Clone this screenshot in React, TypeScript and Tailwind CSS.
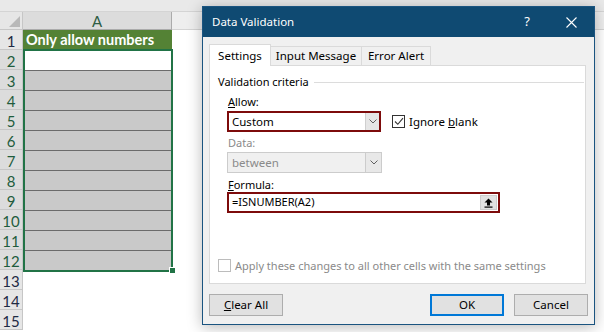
import React from "react";

const rows = Array.from({ length: 15 }, (_, i) => i + 1);

function Chevron() {
  return (
    <svg width="8" height="5" viewBox="0 0 8 5">
      <path d="M0.5 0.5 L4 4 L7.5 0.5" fill="none" stroke="#606060" strokeWidth="1" />
    </svg>
  );
}

function Sheet() {
  return (
    <div className="absolute inset-0 font-['Lato',sans-serif]">
      <div className="h-[12px] bg-[#e9e9e9] border-b border-[#d4d4d4]" />
      <div className="flex h-[18px]">
        <div className="relative w-[23px] bg-[#e6e6e6] border-r border-b border-[#c6c6c6]">
          <svg className="absolute right-[2px] bottom-[2px]" width="11" height="11" viewBox="0 0 11 11">
            <path d="M11 0 L11 11 L0 11 Z" fill="#b9b9b9" />
          </svg>
        </div>
        <div className="w-[149px] bg-[#dcdcdc] border-r border-b border-[#ababab] text-center text-[15px] leading-[18px] text-[#2f5d44]">
          A
        </div>
        <div className="flex-1 bg-[#eeeeee] border-b border-[#d4d4d4]" />
      </div>
      {rows.map((r) => {
        const sel = r >= 2 && r <= 12;
        return (
          <div key={r} className="flex h-[20px]">
            <div
              className={`w-[23px] border-r border-b border-[#c6c6c6] text-center text-[15px] leading-[22px] ${
                sel ? "bg-[#dcdcdc] text-[#1f5c3d]" : "bg-[#e6e6e6] text-[#1e2a44]"
              }`}
            >
              {r}
            </div>
            {r === 1 ? (
              <div className="w-[149px] bg-[#548235] text-white font-bold text-[14.5px] leading-[20px] pl-[3px]">
                Only allow numbers
              </div>
            ) : r >= 3 && r <= 12 ? (
              <div className="w-[149px] bg-[#c9c9c9] border-t border-[#6b6b6b]" />
            ) : (
              <div className="w-[149px] bg-white" />
            )}
            <div className="flex-1 bg-white" />
          </div>
        );
      })}
      <div className="absolute left-[23px] top-[49px] w-[150px] h-[223px] border-2 border-[#217346]" />
      <div className="absolute left-[169px] top-[267px] w-[7px] h-[7px] bg-[#217346] border border-white" />
    </div>
  );
}

function Dialog() {
  return (
    <div className="absolute left-[202px] top-[6px] w-[393px] h-[319px] flex flex-col bg-[#f0f0f0] border border-[#1a5480] shadow-[0_2px_14px_rgba(0,0,0,0.28)] font-['Noto_Sans',sans-serif] text-[11px] text-black">
      <div className="h-[30px] flex items-center bg-[#0f4a72] text-white pl-[9px] pr-[17px]">
        <span className="text-[11.5px]">Data Validation</span>
        <span className="ml-auto text-[13px]">?</span>
        <svg className="ml-[36px]" width="11" height="11" viewBox="0 0 11 11">
          <path d="M0.5 0.5 L10.5 10.5 M10.5 0.5 L0.5 10.5" stroke="white" strokeWidth="1.1" />
        </svg>
      </div>
      <div className="flex-1 flex flex-col px-[6px]">
        <div className="flex items-end h-[21px] mt-[7px]">
          <div className="relative z-10 -mb-px h-[22px] w-[62px] bg-white border-x border-t border-[#dadada] flex items-center justify-center text-[11.5px]">
            Settings
          </div>
          <div className="h-[19px] w-[91px] border-t border-r border-[#dadada] flex items-center justify-center text-[11.5px]">
            Input Message
          </div>
          <div className="h-[19px] w-[69px] border-t border-r border-[#dadada] flex items-center justify-center text-[11.5px]">
            Error Alert
          </div>
        </div>
        <div className="h-[219px] w-[377px] bg-white border border-[#dadada] flex flex-col pl-[8px]">
          <div className="mt-[8px] h-[16px] flex items-center pr-[1px]">
            <span className="leading-[16px]">Validation criteria</span>
            <div className="flex-1 ml-[5px] border-t border-[#dcdcdc]" />
          </div>
          <div className="ml-[9px] flex flex-col">
            <div className="mt-[4px] h-[16px] leading-[16px] pl-[1px]">
              <u>A</u>llow:
            </div>
            <div className="mt-[1px] flex items-center">
              <div className="w-[154px] h-[21px] border-2 border-[#7d0b0b] flex items-center">
                <span className="flex-1 pl-[3px] leading-[17px] text-[11.5px]">Custom</span>
                <div className="w-[14px] h-full bg-[#e6e6e6] border-l border-[#cfcfcf] flex items-center justify-center">
                  <Chevron />
                </div>
              </div>
              <div className="ml-[11px] w-[13px] h-[13px] border border-[#333333] flex items-center justify-center">
                <svg width="10" height="9" viewBox="0 0 10 9">
                  <path d="M1 4.5 L3.8 7.3 L9 1.2" fill="none" stroke="#333333" strokeWidth="1.1" />
                </svg>
              </div>
              <span className="ml-[4px] text-[11.5px]">
                Ignore <u>b</u>lank
              </span>
            </div>
            <div className="mt-[3px] h-[16px] leading-[16px] pl-[1px] text-[#8a8a8a]">Data:</div>
            <div className="mt-[1px] w-[155px] h-[21px] border border-[#cccccc] bg-[#f0f0f0] flex items-center text-[#8a8a8a]">
              <span className="flex-1 pl-[4px] text-[11.5px]">between</span>
              <div className="w-[16px] h-full bg-[#e8e8e8] border-l border-[#cccccc] flex items-center justify-center">
                <Chevron />
              </div>
            </div>
            <div className="mt-[4px] h-[15px] leading-[15px] pl-[1px]">
              <u>F</u>ormula:
            </div>
            <div className="w-[273px] h-[21px] border-2 border-[#7d0b0b] flex items-center">
              <span className="flex-1 pl-[3px]">=ISNUMBER(A2)</span>
              <div className="mr-[1px] w-[17px] h-[15px] bg-[#e1e1e1] border border-[#cccccc] flex items-center justify-center">
                <svg width="9" height="10" viewBox="0 0 9 10">
                  <path d="M4.5 0.5 L8.5 4.5 L6 4.5 L6 7.5 L3 7.5 L3 4.5 L0.5 4.5 Z" fill="black" />
                  <rect x="0.5" y="8.5" width="8" height="1.2" fill="black" />
                </svg>
              </div>
            </div>
          </div>
          <div className="mt-auto mb-[9px] flex items-center text-[#8a8a8a] text-[11px]">
            <div className="w-[13px] h-[13px] border border-[#bcbcbc] bg-white" />
            <span className="ml-[4px]">Apply these changes to all other cells with the same settings</span>
          </div>
        </div>
        <div className="mt-[10px] flex text-[11.5px]">
          <div className="w-[74px] h-[22px] bg-[#e1e1e1] border border-[#adadad] flex items-center justify-center">
            <span>
              <u>C</u>lear All
            </span>
          </div>
          <div className="ml-auto w-[74px] h-[22px] bg-[#e1e1e1] border-2 border-[#0078d7] flex items-center justify-center">
            OK
          </div>
          <div className="ml-[10px] w-[74px] h-[22px] bg-[#e1e1e1] border border-[#adadad] flex items-center justify-center">
            Cancel
          </div>
        </div>
      </div>
    </div>
  );
}

export default function App() {
  return (
    <div className="relative w-[604px] h-[332px] bg-white overflow-hidden">
      <Sheet />
      <Dialog />
    </div>
  );
}
